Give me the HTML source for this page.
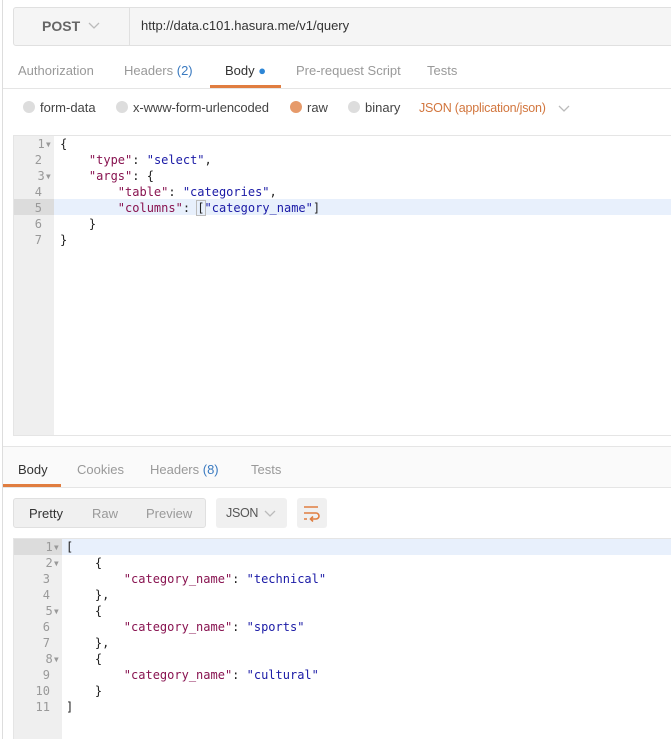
<!DOCTYPE html>
<html><head><meta charset="utf-8"><style>
*{margin:0;padding:0;box-sizing:border-box}
body{width:671px;height:739px;overflow:hidden;background:#fff;font-family:"Liberation Sans",sans-serif;font-size:13px;color:#505050;position:relative}
.abs{position:absolute}
.mono{font-family:"DejaVu Sans Mono","Liberation Mono",monospace;font-size:12px}
.ln{position:absolute;height:16px;line-height:16px;white-space:pre}
.k{color:#881350}.s{color:#1a1aa6}.p{color:#222}
.g{color:#999;text-align:right}
</style></head><body>
<div class="abs" style="left:2px;top:0;width:1px;height:739px;background:#ddd"></div>
<div class="abs" style="left:13px;top:7px;width:670px;height:39px;background:#f5f5f5;border:1px solid #e0e0e0;border-radius:3px"></div>
<div class="abs" style="left:129px;top:8px;width:1px;height:37px;background:#e0e0e0"></div>
<div class="abs" style="left:42px;top:18px;font-size:14px;font-weight:bold;color:#666">POST</div>
<svg class="abs" style="left:88px;top:22px" width="12" height="8"><path d="M1 1L6 6L11 1" fill="none" stroke="#bbb" stroke-width="1.3"/></svg>
<div class="abs" style="left:141px;top:18px;font-size:13px;color:#333">http://data.c101.hasura.me/v1/query</div>
<div class="abs" style="left:3px;top:88px;width:668px;height:1px;background:#e5e5e5"></div>
<div class="abs" style="left:18px;top:63px;color:#999">Authorization</div>
<div class="abs" style="left:124px;top:63px;color:#999">Headers <span style="color:#3a7ac0">(2)</span></div>
<div class="abs" style="left:225px;top:63px;color:#333">Body <span style="color:#2d86d6">●</span></div>
<div class="abs" style="left:210px;top:85px;width:71px;height:3px;background:#e07d40"></div>
<div class="abs" style="left:296px;top:63px;color:#999">Pre-request Script</div>
<div class="abs" style="left:427px;top:63px;color:#999">Tests</div>
<div class="abs" style="left:23px;top:101px;width:12px;height:12px;border-radius:50%;background:#ddd"></div>
<div class="abs" style="left:40px;top:100px;color:#444">form-data</div>
<div class="abs" style="left:116px;top:101px;width:12px;height:12px;border-radius:50%;background:#ddd"></div>
<div class="abs" style="left:133px;top:100px;color:#444;letter-spacing:-0.1px">x-www-form-urlencoded</div>
<div class="abs" style="left:290px;top:101px;width:12px;height:12px;border-radius:50%;background:#e69a6a"></div>
<div class="abs" style="left:307px;top:100px;color:#444">raw</div>
<div class="abs" style="left:348px;top:101px;width:12px;height:12px;border-radius:50%;background:#ddd"></div>
<div class="abs" style="left:365px;top:100px;color:#444">binary</div>
<div class="abs" style="left:419px;top:101px;color:#d2763e;font-size:12.5px;letter-spacing:-0.2px">JSON (application/json)</div>
<svg class="abs" style="left:558px;top:105px" width="12" height="8"><path d="M1 1L6 6L11 1" fill="none" stroke="#bbb" stroke-width="1.3"/></svg>
<div class="abs" style="left:13px;top:135px;width:660px;height:301px;border:1px solid #e5e5e5"></div>
<div class="abs" style="left:14px;top:136px;width:40px;height:299px;background:#efefef"></div>
<div class="abs" style="left:54px;top:199px;width:617px;height:16px;background:#e8f0fc"></div>
<div class="abs" style="left:14px;top:199px;width:40px;height:16px;background:#dcdcdc"></div>
<div class="abs mono" style="left:14px;top:136px;width:657px">
<div class="ln g" style="top:0;left:0;width:38px">1▾</div>
<div class="ln g" style="top:16px;left:0;width:28px">2</div>
<div class="ln g" style="top:32px;left:0;width:38px">3▾</div>
<div class="ln g" style="top:48px;left:0;width:28px">4</div>
<div class="ln g" style="top:64px;left:0;width:28px">5</div>
<div class="ln g" style="top:80px;left:0;width:28px">6</div>
<div class="ln g" style="top:96px;left:0;width:28px">7</div>
<div class="ln p" style="top:0;left:46px">{</div>
<div class="ln" style="top:16px;left:46px">    <span class="k">"type"</span><span class="p">: </span><span class="s">"select"</span><span class="p">,</span></div>
<div class="ln" style="top:32px;left:46px">    <span class="k">"args"</span><span class="p">: {</span></div>
<div class="ln" style="top:48px;left:46px">        <span class="k">"table"</span><span class="p">: </span><span class="s">"categories"</span><span class="p">,</span></div>
<div class="ln" style="top:64px;left:46px">        <span class="k">"columns"</span><span class="p">: </span><span class="p" style="outline:1px solid #bbb">[</span><span class="s">"category_name"</span><span class="p">]</span></div>
<div class="ln p" style="top:80px;left:46px">    }</div>
<div class="ln p" style="top:96px;left:46px">}</div>
</div>
<div class="abs" style="left:3px;top:446px;width:668px;height:1px;background:#e5e5e5"></div>
<div class="abs" style="left:3px;top:447px;width:668px;height:41px;background:#fafafa"></div>
<div class="abs" style="left:3px;top:487px;width:668px;height:1px;background:#e5e5e5"></div>
<div class="abs" style="left:18px;top:462px;color:#333">Body</div>
<div class="abs" style="left:3px;top:484px;width:58px;height:3px;background:#e07d40"></div>
<div class="abs" style="left:77px;top:462px;color:#999">Cookies</div>
<div class="abs" style="left:150px;top:462px;color:#999">Headers <span style="color:#3a7ac0">(8)</span></div>
<div class="abs" style="left:251px;top:462px;color:#999">Tests</div>
<div class="abs" style="left:13px;top:498px;width:193px;height:30px;background:#f0f0f0;border:1px solid #e0e0e0;border-radius:3px"></div>
<div class="abs" style="left:29px;top:506px;color:#333">Pretty</div>
<div class="abs" style="left:92px;top:506px;color:#999">Raw</div>
<div class="abs" style="left:146px;top:506px;color:#999">Preview</div>
<div class="abs" style="left:216px;top:498px;width:71px;height:30px;background:#f0f0f0;border-radius:3px"></div>
<div class="abs" style="left:226px;top:506px;color:#555;font-size:12.5px;letter-spacing:-0.3px">JSON</div>
<svg class="abs" style="left:264px;top:510px" width="12" height="8"><path d="M1 1L6 6L11 1" fill="none" stroke="#bbb" stroke-width="1.3"/></svg>
<div class="abs" style="left:297px;top:498px;width:30px;height:30px;background:#f0f0f0;border-radius:3px"></div>
<svg class="abs" style="left:302px;top:504px" width="20" height="18"><path d="M2 3H16M2 9H14a3 3 0 0 1 0 6H9M11 12.5L8.5 15L11 17.5M2 15H5" fill="none" stroke="#e07d40" stroke-width="1.6"/></svg>
<div class="abs" style="left:13px;top:538px;width:660px;height:201px;border-top:1px solid #e5e5e5;border-left:1px solid #e5e5e5"></div>
<div class="abs" style="left:14px;top:539px;width:48px;height:200px;background:#efefef"></div>
<div class="abs" style="left:62px;top:539px;width:609px;height:16px;background:#e8f0fc"></div>
<div class="abs" style="left:14px;top:539px;width:48px;height:16px;background:#dcdcdc"></div>
<div class="abs mono" style="left:14px;top:539px;width:657px">
<div class="ln g" style="top:0;width:46px">1▾</div>
<div class="ln g" style="top:16px;width:46px">2▾</div>
<div class="ln g" style="top:32px;width:36px">3</div>
<div class="ln g" style="top:48px;width:36px">4</div>
<div class="ln g" style="top:64px;width:46px">5▾</div>
<div class="ln g" style="top:80px;width:36px">6</div>
<div class="ln g" style="top:96px;width:36px">7</div>
<div class="ln g" style="top:112px;width:46px">8▾</div>
<div class="ln g" style="top:128px;width:36px">9</div>
<div class="ln g" style="top:144px;width:36px">10</div>
<div class="ln g" style="top:160px;width:36px">11</div>
<div class="ln p" style="top:0;left:52px">[</div>
<div class="ln p" style="top:16px;left:52px">    {</div>
<div class="ln" style="top:32px;left:52px">        <span class="k">"category_name"</span><span class="p">: </span><span class="s">"technical"</span></div>
<div class="ln p" style="top:48px;left:52px">    },</div>
<div class="ln p" style="top:64px;left:52px">    {</div>
<div class="ln" style="top:80px;left:52px">        <span class="k">"category_name"</span><span class="p">: </span><span class="s">"sports"</span></div>
<div class="ln p" style="top:96px;left:52px">    },</div>
<div class="ln p" style="top:112px;left:52px">    {</div>
<div class="ln" style="top:128px;left:52px">        <span class="k">"category_name"</span><span class="p">: </span><span class="s">"cultural"</span></div>
<div class="ln p" style="top:144px;left:52px">    }</div>
<div class="ln p" style="top:160px;left:52px">]</div>
</div>
</body></html>
